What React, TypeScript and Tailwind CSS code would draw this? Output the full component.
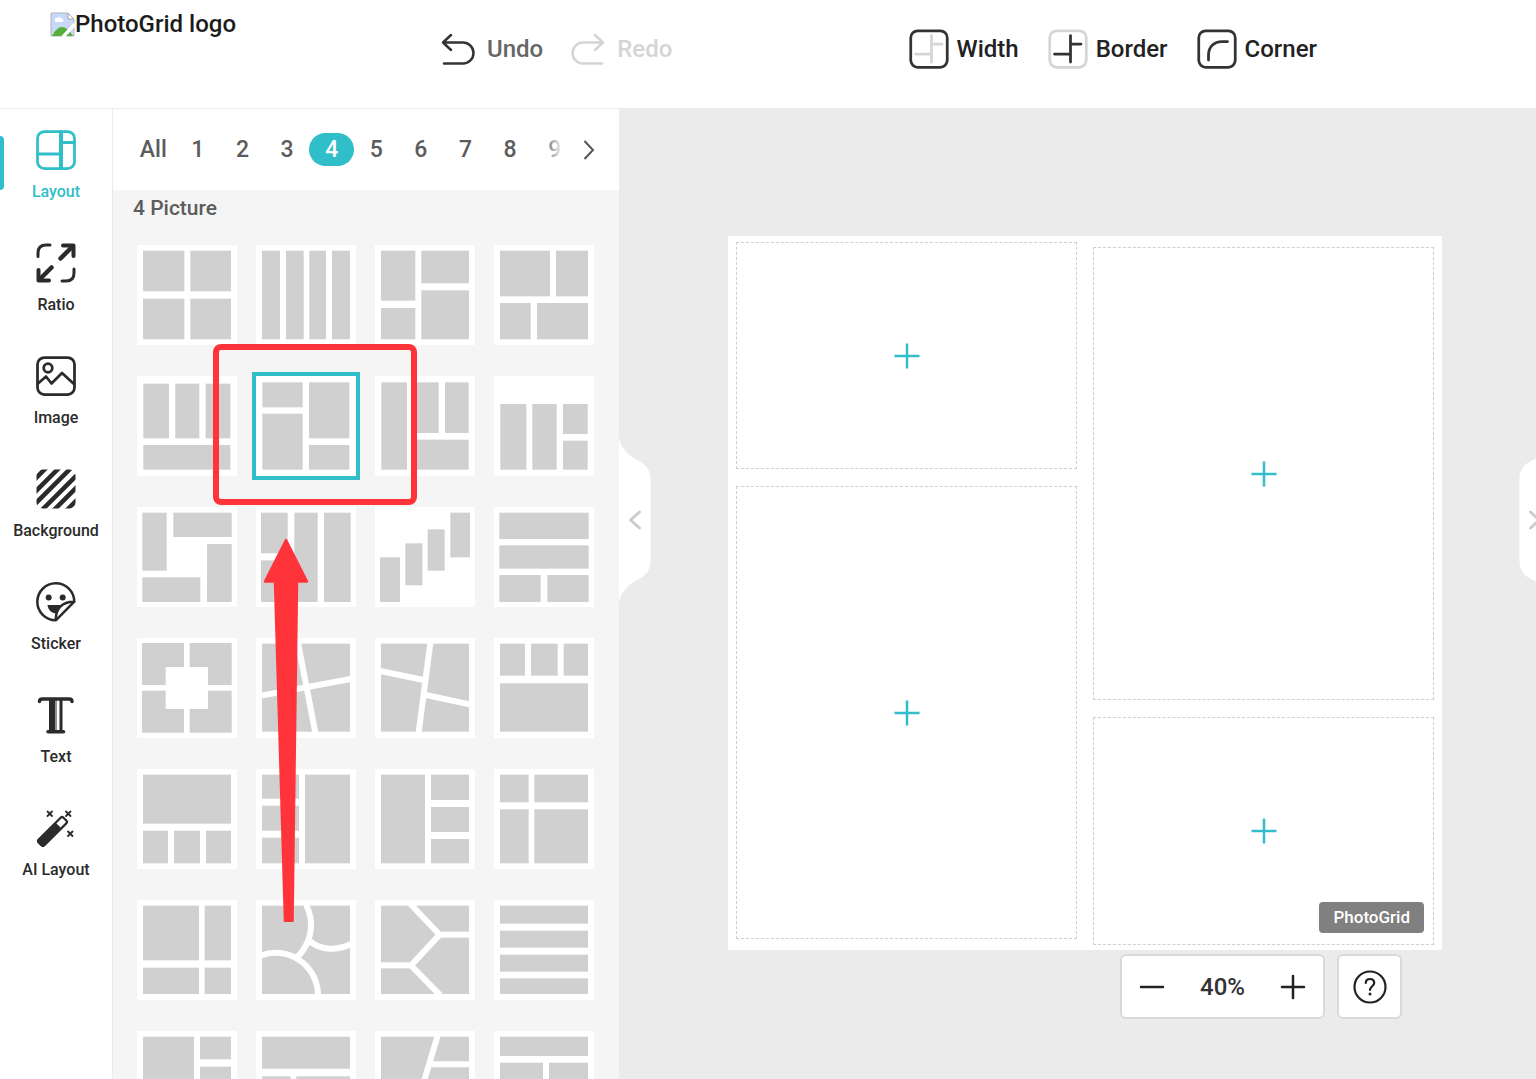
import { useState } from "react";
import type { ReactNode } from "react";

type Rect = [number, number, number, number];

// Every template is drawn on a 300 x 300 board as x1, y1, x2, y2
type Template = {
  rects?: Rect[];
  cuts?: string[];
  hole?: Rect;
};

const templates: Template[] = [
  { rects: [[18, 17, 142, 139], [160, 17, 282, 139], [18, 161, 142, 283], [160, 161, 282, 283]] },
  { rects: [[18, 17, 72, 283], [90, 17, 143, 283], [160, 17, 210, 283], [228, 17, 282, 283]] },
  { rects: [[18, 17, 121, 167], [18, 189, 121, 283], [139, 17, 282, 115], [139, 136, 282, 283]] },
  { rects: [[18, 17, 168, 154], [186, 17, 282, 154], [18, 174, 110, 283], [129, 174, 282, 283]] },

  { rects: [[19, 23, 96, 187], [115, 23, 187, 187], [206, 23, 280, 187], [19, 207, 280, 281]] },
  { rects: [[19, 19, 140, 94], [19, 113, 140, 281], [159, 19, 280, 187], [159, 207, 280, 281]] },
  { rects: [[19, 19, 96, 281], [115, 19, 191, 171], [210, 19, 281, 171], [115, 191, 281, 281]] },
  { rects: [[19, 84, 97, 281], [115, 84, 188, 281], [207, 84, 281, 174], [207, 194, 281, 281]] },

  { rects: [[16, 17, 89, 191], [109, 17, 284, 90], [210, 111, 284, 285], [16, 211, 190, 285]] },
  { rects: [[15, 17, 95, 139], [15, 160, 95, 285], [115, 17, 185, 285], [204, 17, 284, 285]] },
  { rects: [[15, 151, 75, 285], [91, 109, 142, 235], [158, 67, 209, 191], [226, 17, 285, 151]] },
  { rects: [[16, 17, 284, 96], [16, 115, 284, 185], [16, 204, 140, 285], [160, 204, 284, 285]] },

  {
    rects: [[15, 15, 141, 141], [158, 15, 284, 141], [15, 158, 141, 284], [158, 158, 284, 284]],
    hole: [86, 87, 213, 213],
  },
  { rects: [[18, 17, 282, 281]], cuts: ["M126 15L178 284", "M16 173L284 123"] },
  { rects: [[18, 17, 282, 281]], cuts: ["M166 15L131 283", "M16 99L146 126", "M153 171L284 199"] },
  { rects: [[18, 17, 93, 113], [111, 17, 191, 113], [209, 17, 282, 113], [18, 136, 282, 281]] },

  { rects: [[18, 17, 282, 164], [18, 185, 93, 283], [111, 185, 189, 283], [207, 185, 282, 283]] },
  { rects: [[18, 17, 129, 89], [18, 110, 129, 185], [18, 206, 129, 283], [147, 17, 282, 283]] },
  { rects: [[18, 17, 150, 283], [168, 17, 282, 93], [168, 114, 282, 189], [168, 210, 282, 283]] },
  { rects: [[18, 17, 104, 100], [121, 17, 282, 100], [18, 121, 104, 283], [121, 121, 282, 283]] },

  { rects: [[18, 17, 186, 181], [203, 17, 282, 181], [18, 203, 186, 282], [203, 203, 282, 282]] },
  {
    rects: [[18, 17, 282, 282]],
    cuts: ["M150 14C175 62 171 122 124 172", "M16 166A127 127 0 0 1 186 286", "M162 124C196 152 245 152 284 132"],
  },
  { rects: [[18, 17, 282, 282]], cuts: ["M106 12L194 104L108 196L196 286", "M194 104H284", "M16 196H108"] },
  { rects: [[18, 17, 282, 71], [18, 92, 282, 143], [18, 164, 282, 215], [18, 235, 282, 282]] },

  { rects: [[18, 17, 171, 282], [189, 17, 282, 85], [189, 107, 282, 175], [189, 197, 282, 282]] },
  { rects: [[18, 17, 282, 113], [18, 136, 104, 282], [121, 136, 282, 282]] },
  { rects: [[18, 17, 282, 282]], cuts: ["M188 14L107 284", "M164 100H284"] },
  { rects: [[18, 17, 282, 75], [18, 95, 147, 282], [165, 95, 282, 282]] },
];

const counts = ["All", "1", "2", "3", "4", "5", "6", "7", "8", "9"];

const BrokenImage = () => (
  <svg viewBox="0 0 25 25" className="size-[25px]" aria-hidden="true">
    <path d="M1 1H18L24 7V24H1Z" fill="#c7d9f7" stroke="#b0b5bb" strokeWidth="1" />
    <path d="M18 1V7H24Z" fill="#fff" stroke="#a3a3a3" strokeWidth="1" />
    <path d="M5 9a2 2 0 0 1 2-3a3 2.600 0 0 1 5 1a1.500 1.500 0 0 1 0 3H6Z" fill="#fff" />
    <path d="M2 24C5 18 9 15 12 15C16 15 20 19 23 24Z" fill="#57ad3a" />
    <path d="M25 12L13 25" stroke="#fff" strokeWidth="3.500" />
  </svg>
);

const UndoIcon = ({ flip = false }: { flip?: boolean }) => (
  <svg
    viewBox="0 0 34 33"
    className={`h-[33px] w-[34px] ${flip ? "-scale-x-100" : ""}`}
    fill="none"
    stroke="currentColor"
    strokeWidth="2.500"
    strokeLinecap="round"
    strokeLinejoin="round"
    aria-hidden="true"
  >
    <path d="M10 2L2 9.500L10 17M2 9.500H22A10.500 10.500 0 0 1 22 30.500H3" />
  </svg>
);

const FrameIcon = ({ frame, inner, path }: { frame: string; inner: string; path: string }) => (
  <svg viewBox="0 0 40 40" className="size-10" fill="none" strokeWidth="2.750" strokeLinecap="round" aria-hidden="true">
    <rect x="1.750" y="1.750" width="36.500" height="36.500" rx="7" stroke={frame} />
    <path d={path} stroke={inner} />
  </svg>
);

const SideIcon = ({ children }: { children: ReactNode }) => (
  <svg
    viewBox="0 0 40 40"
    className="size-10"
    fill="none"
    stroke="currentColor"
    strokeWidth="2.750"
    strokeLinecap="round"
    strokeLinejoin="round"
    aria-hidden="true"
  >
    {children}
  </svg>
);

const LINES = "M22.500 6.500V33M22.500 15H33M6.500 25H22.500";

const tools = [
  { label: "Width", frame: "#333", inner: "#d5d5d5", path: LINES },
  { label: "Border", frame: "#d5d5d5", inner: "#333", path: LINES },
  { label: "Corner", frame: "#333", inner: "#333", path: "M11.500 31V26C11.500 18 17 12.500 25 12.500H30.500" },
];

const navItems = [
  {
    label: "Layout",
    icon: (
      <SideIcon>
        <rect x="1.500" y="1.500" width="37" height="37" rx="7" />
        <path d="M25 2V38" strokeWidth="4" />
        <path d="M2 24H25M25 12.500H38" strokeWidth="3" />
      </SideIcon>
    ),
  },
  {
    label: "Ratio",
    icon: (
      <SideIcon>
        <path d="M2 13.500V10Q2 2 10 2H14M38 26V30Q38 38 30 38H26" strokeWidth="3" />
        <path d="M24.500 15.500L36 4M15.500 24.500L4 36" strokeWidth="4.500" />
        <path d="M27 2.500H37.500V13M2.500 27V37.500H13" strokeWidth="4" />
      </SideIcon>
    ),
  },
  {
    label: "Image",
    icon: (
      <SideIcon>
        <rect x="1.500" y="1.500" width="37" height="37" rx="7" />
        <circle cx="12" cy="12" r="4.300" />
        <path d="M2 27.500L10 20.500L15.500 27.500L26 17L38 28" />
      </SideIcon>
    ),
  },
  {
    label: "Background",
    icon: (
      <SideIcon>
        <clipPath id="stripes">
          <rect x="0.500" y="0.500" width="39" height="39" rx="6" />
        </clipPath>
        <path
          clipPath="url(#stripes)"
          strokeWidth="4.500"
          d="M-5 14L14 -5M-5 27L27 -5M-5 39L39 -5M1 46L46 1M13 46L46 13M26 46L46 26"
        />
      </SideIcon>
    ),
  },
  {
    label: "Sticker",
    icon: (
      <SideIcon>
        <path d="M38.300 19.700A18.500 18.500 0 1 0 19.800 38.300L38.300 19.700C26 19.500 19.500 27 19.800 38.300" strokeWidth="2.500" />
        <g fill="currentColor" stroke="none">
          <circle cx="12.700" cy="15.500" r="3" />
          <circle cx="26.700" cy="15.500" r="3" />
          <path d="M11.500 23H27C23 25.500 21 28 20.500 31.500C15.500 31 12 28 11.500 23Z" />
        </g>
      </SideIcon>
    ),
  },
  {
    label: "Text",
    icon: (
      <SideIcon>
        <path d="M3.500 6.500Q3.500 4 6.500 4H33Q36 4 36 6.500" strokeWidth="3.500" />
        <path d="M13 4H19.500V36H13Z" fill="currentColor" stroke="none" />
        <path d="M20.500 5V36" strokeWidth="1" opacity="0.500" />
        <path d="M25 5V36" strokeWidth="3" />
        <path d="M12 36.700H27.500" strokeWidth="3.500" />
      </SideIcon>
    ),
  },
  {
    label: "AI Layout",
    icon: (
      <SideIcon>
        <g transform="rotate(-45 16.500 23.500)">
          <rect x="-1" y="19.500" width="35" height="8" rx="2" strokeWidth="2.200" />
          <rect x="-2" y="19" width="27" height="9" rx="2" fill="currentColor" stroke="none" />
        </g>
        <path
          d="M11.500 3.500l4.500 4.500m0 -4.500l-4.500 4.500M30 3.500l4.500 4.500m0 -4.500l-4.500 4.500M32 23.500l4.500 4.500m0 -4.500l-4.500 4.500"
          strokeWidth="1.800"
        />
      </SideIcon>
    ),
  },
];

const Thumbnail = ({ template }: { template: Template }) => (
  <svg viewBox="0 0 300 300" className="block w-full bg-white" aria-hidden="true">
    {template.rects?.map(([x1, y1, x2, y2], idx) => (
      <rect key={idx} x={x1} y={y1} width={x2 - x1} height={y2 - y1} fill="#d0d0d0" />
    ))}
    {template.cuts?.map((cut) => (
      <path key={cut} d={cut} fill="none" stroke="#fff" strokeWidth="18" />
    ))}
    {template.hole && (
      <rect
        x={template.hole[0]}
        y={template.hole[1]}
        width={template.hole[2] - template.hole[0]}
        height={template.hole[3] - template.hole[1]}
        fill="#fff"
      />
    )}
  </svg>
);

const Plus = () => (
  <svg viewBox="0 0 26 26" className="size-[26px] text-[#30bec9]" stroke="currentColor" strokeWidth="2.500" aria-hidden="true">
    <path d="M13 0.500V25.500M0.500 13H25.500" />
  </svg>
);

const Cell = ({ className, label }: { className: string; label: string }) => (
  <button
    aria-label={label}
    className={`flex w-full items-center justify-center border border-dashed border-[#cfcfcf] ${className}`}
  >
    <Plus />
  </button>
);

const DrawerHandle = ({ className, label }: { className: string; label: string }) => (
  <button aria-label={label} className={`absolute top-[330px] ${className}`}>
    <svg viewBox="0 0 32 162" className="h-[162px] w-8" aria-hidden="true">
      <path
        d="M0 0C4 12 10 17 18 21C27 25 31.500 31 31.500 40V122C31.500 131 27 137 18 141C10 145 4 150 0 162Z"
        fill="#fff"
      />
      <path d="M20.500 73L11.500 81L20.500 89" fill="none" stroke="#ccc" strokeWidth="3" strokeLinecap="round" strokeLinejoin="round" />
    </svg>
  </button>
);

const App = () => {
  const [section, setSection] = useState("Layout");
  const [count, setCount] = useState("4");
  const [selected, setSelected] = useState(5);

  return (
    <div className="flex h-screen flex-col overflow-hidden bg-white font-[Roboto,sans-serif] font-medium text-[#222]">
      {/* Top bar */}
      <header className="flex h-[109px] shrink-0 items-center border-b border-[#ebebeb] pr-[219px] pl-[50px]">
        <a href="#" className="flex w-[391px] shrink-0 self-start pt-2 text-2xl text-[#1c1c1c]">
          <span className="pt-1">
            <BrokenImage />
          </span>
          <span>PhotoGrid logo</span>
        </a>
        <div className="flex items-center gap-7 pb-2.5 text-2xl">
          <button className="flex items-center gap-3 text-[#333]">
            <UndoIcon />
            <span className="text-[#666]">Undo</span>
          </button>
          <button disabled className="flex items-center gap-3 text-[#d5d5d5]">
            <UndoIcon flip />
            <span>Redo</span>
          </button>
        </div>
        <div className="ml-auto flex items-center gap-[29px] pb-2.5 text-2xl">
          {tools.map((tool) => (
            <button key={tool.label} className="flex items-center gap-2">
              <FrameIcon frame={tool.frame} inner={tool.inner} path={tool.path} />
              {tool.label}
            </button>
          ))}
        </div>
      </header>

      <div className="flex min-h-0 flex-1">
        {/* Sections */}
        <nav className="w-[113px] shrink-0 border-r border-[#ebebeb]">
          {navItems.map((item) => {
            const active = item.label === section;
            return (
              <button
                key={item.label}
                onClick={() => setSection(item.label)}
                className={`relative flex h-[113px] w-full flex-col items-center gap-2.5 pt-[21px] text-base ${active ? "text-[#30bec9]" : "text-[#2b2b2b]"}`}
              >
                {active && <span className="absolute top-[27px] left-0 h-[54px] w-1 rounded-r bg-[#30bec9]" />}
                {item.icon}
                <span className="whitespace-nowrap">{item.label}</span>
              </button>
            );
          })}
        </nav>

        {/* Templates */}
        <section className="flex w-[506px] shrink-0 flex-col bg-[#f5f5f5]">
          <div className="flex h-[81px] shrink-0 items-center bg-white pl-[18px]">
            <div className="relative w-[432px] overflow-hidden">
              <div className="grid w-[446px] grid-cols-10">
                {counts.map((item) => (
                  <button
                    key={item}
                    onClick={() => setCount(item)}
                    className={`h-[33px] rounded-full text-[23px] leading-[34px] ${item === count ? "bg-[#30bec9] text-white" : "text-[#5c5c5c]"}`}
                  >
                    {item}
                  </button>
                ))}
              </div>
              <span className="absolute inset-y-0 right-0 w-5 bg-gradient-to-r from-white/0 to-white" />
            </div>
            <button aria-label="More" className="ml-5">
              <svg viewBox="0 0 12 20" className="h-5 w-3" fill="none" stroke="#555" strokeWidth="2" aria-hidden="true">
                <path d="M1.500 1L10 10L1.500 19" />
              </svg>
            </button>
          </div>

          <div className="min-h-0 flex-1 overflow-hidden">
            <h2 className="h-[55px] pt-0.5 pl-5 text-[21px] leading-8 text-[#5c5c5c]">{count} Picture</h2>
            <div className="relative grid grid-cols-4 gap-x-[19px] gap-y-[31px] pr-[25px] pl-6">
              {templates.map((template, idx) => (
                <button
                  key={idx}
                  aria-label={`Template ${idx + 1}`}
                  onClick={() => setSelected(idx)}
                  className={idx === selected ? "outline-4 outline-[#30bec9]" : ""}
                >
                  <Thumbnail template={template} />
                </button>
              ))}

              {/* Callout */}
              <div className="pointer-events-none absolute top-[99px] left-[100px] h-[161px] w-[204px] rounded-lg border-6 border-[#ff343b]" />
              <svg
                viewBox="0 0 46 384"
                className="pointer-events-none absolute top-[293px] left-[150px] h-[384px] w-[46px]"
                aria-hidden="true"
              >
                <path
                  d="M23 2L44 43.500H34L29.500 383H22L12 43.500H2Z"
                  fill="#ff343b"
                  stroke="#ff343b"
                  strokeWidth="2.500"
                  strokeLinejoin="round"
                />
              </svg>
            </div>
          </div>
        </section>

        {/* Canvas */}
        <main className="relative min-w-0 flex-1 overflow-hidden bg-[#ebebeb] pt-[127px] pr-[94px] pl-[109px]">
          <DrawerHandle className="left-0" label="Hide templates" />
          <DrawerHandle className="-right-[15px] rotate-180" label="Show settings" />

          <div className="relative grid aspect-square w-full grid-cols-2 gap-x-4 bg-white px-2">
            <div className="flex min-h-0 flex-col gap-[17px] pt-[6px] pb-[11px]">
              <Cell label="Add picture 1" className="flex-1" />
              <Cell label="Add picture 2" className="flex-2" />
            </div>
            <div className="flex min-h-0 flex-col gap-[17px] pt-[11px] pb-[5px]">
              <Cell label="Add picture 3" className="flex-2" />
              <Cell label="Add picture 4" className="flex-1" />
            </div>
            <span className="absolute right-[18px] bottom-[17px] rounded bg-[#808080] px-[14px] text-[17px] leading-[31px] text-white">
              PhotoGrid
            </span>
          </div>

          <div className="mt-1 flex justify-end gap-3 pr-10">
            <div className="flex h-[65px] w-[205px] items-center justify-between rounded-md border-2 border-[#dadada] bg-white px-[17px] text-2xl text-[#333]">
              <button aria-label="Zoom out">
                <svg viewBox="0 0 26 26" className="size-[26px]" stroke="#222" strokeWidth="2.500" strokeLinecap="round" aria-hidden="true">
                  <path d="M2 13H24" />
                </svg>
              </button>
              <span>40%</span>
              <button aria-label="Zoom in">
                <svg viewBox="0 0 26 26" className="size-[26px]" stroke="#222" strokeWidth="2.500" strokeLinecap="round" aria-hidden="true">
                  <path d="M2 13H24M13 2V24" />
                </svg>
              </button>
            </div>
            <button
              aria-label="Help"
              className="flex size-[65px] items-center justify-center rounded-md border-2 border-[#dadada] bg-white"
            >
              <svg viewBox="0 0 34 34" className="size-[34px]" fill="none" stroke="#222" strokeWidth="2.200" strokeLinecap="round" aria-hidden="true">
                <circle cx="17" cy="17" r="15.500" />
                <path d="M12.800 13C12.800 10.500 14.500 9 17 9S21.200 10.600 21.200 13C21.200 16 17 16.500 17 20" />
                <circle cx="17" cy="24" r="1.500" fill="#222" stroke="none" />
              </svg>
            </button>
          </div>
        </main>
      </div>
    </div>
  );
};

export default App;
